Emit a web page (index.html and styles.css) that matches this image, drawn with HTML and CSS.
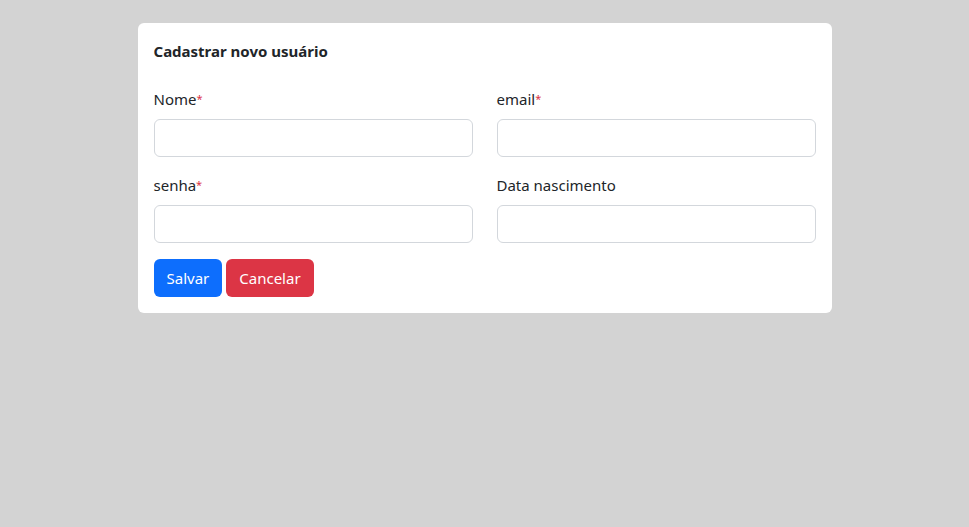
FILE: index.html
```html
<!DOCTYPE html>
<html lang="pt">
<head>
<meta charset="utf-8">
<title>Cadastrar novo usuário</title>
<link rel="stylesheet" href="styles.css">
</head>
<body>
<div class="card">
  <h5 class="card-title">Cadastrar novo usuário</h5>
  <form class="form-grid">
    <div class="field">
      <label class="label">Nome<span class="req">*</span></label>
      <input class="input" type="text">
    </div>
    <div class="field">
      <label class="label">email<span class="req">*</span></label>
      <input class="input" type="text">
    </div>
    <div class="field">
      <label class="label">senha<span class="req">*</span></label>
      <input class="input" type="password">
    </div>
    <div class="field">
      <label class="label">Data nascimento</label>
      <input class="input" type="text">
    </div>
    <div class="actions">
      <button type="button" class="btn btn-primary">Salvar</button>
      <button type="button" class="btn btn-danger">Cancelar</button>
    </div>
  </form>
</div>
</body>
</html>
```

FILE: styles.css
```css
html, body {
  margin: 0;
  padding: 0;
}
body {
  background: #d3d3d3;
  font-family: "Noto Sans", "Open Sans", sans-serif;
  font-size: 15px;
  line-height: 24px;
  color: #212529;
  min-height: 527px;
}
.card {
  width: 694px;
  box-sizing: border-box;
  margin: 23px auto 0;
  background: #fff;
  border-radius: 6px;
  padding: 16px;
}
.card-title {
  margin: 0 0 24px;
  font-size: 15px;
  font-weight: 700;
  line-height: 24px;
}
.form-grid {
  display: grid;
  grid-template-columns: 1fr 1fr;
  column-gap: 24px;
  row-gap: 16px;
}
.field {
  display: flex;
  flex-direction: column;
}
.label {
  margin-bottom: 8px;
}
.req {
  color: #dc3545;
  font-size: 11px;
  vertical-align: top;
}
.input {
  height: 38px;
  box-sizing: border-box;
  border: 1px solid #d3d7dc;
  border-radius: 6px;
  background: #fff;
  padding: 6px 12px;
  font: inherit;
}
.actions {
  grid-column: 1 / -1;
  display: flex;
  gap: 4px;
}
.btn {
  height: 38px;
  box-sizing: border-box;
  padding: 6px 12px;
  border: 1px solid transparent;
  border-radius: 6px;
  color: #fff;
  font: inherit;
  cursor: pointer;
}
.btn-primary {
  background: #0d6efd;
}
.btn-danger {
  background: #dc3545;
}
```
